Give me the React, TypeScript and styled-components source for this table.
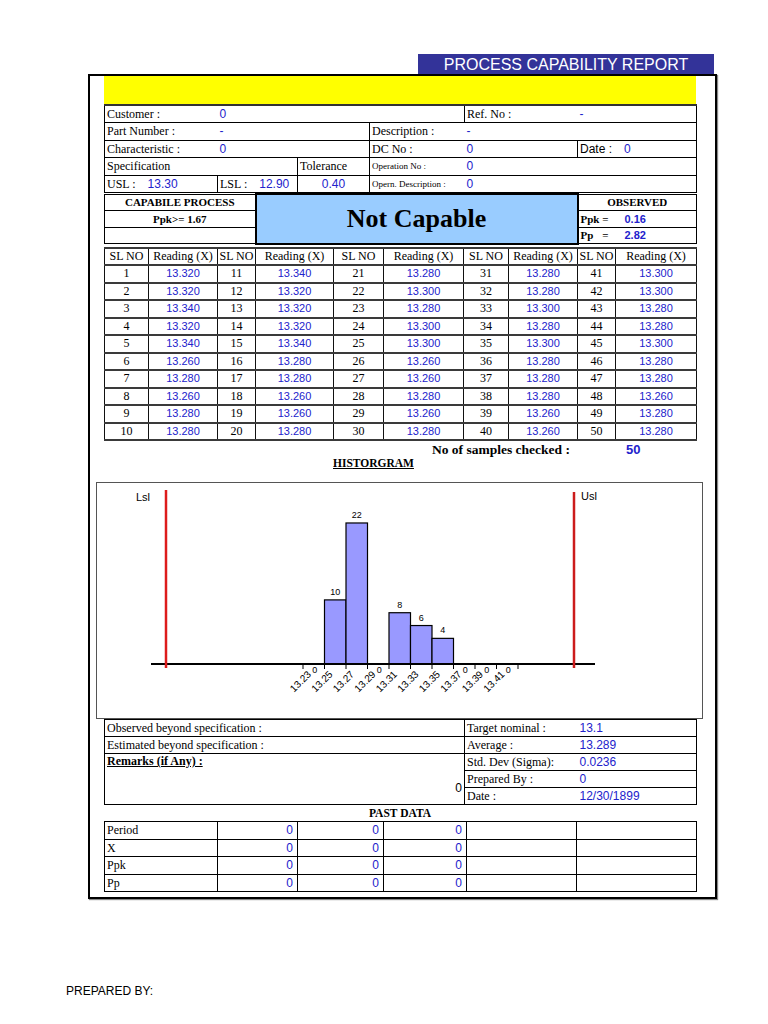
import styled, { createGlobalStyle } from 'styled-components';

const BLUE = '#2222cc';
const SERIF = '"Liberation Serif", "Times New Roman", serif';
const SANS = '"Liberation Sans", Arial, sans-serif';

const GlobalStyle = createGlobalStyle`
  html, body {
    margin: 0;
    padding: 0;
    background: #fff;
  }
  body {
    font-family: ${SERIF};
    color: #000;
  }
`;

const Page = styled.div`
  width: 768px;
  height: 1024px;
  padding-top: 54px;
  box-sizing: border-box;
`;

const Banner = styled.div`
  margin-left: 418px;
  width: 296px;
  height: 20px;
  background: #333399;
  color: #fff;
  font: 16px/21px ${SANS};
  text-align: center;
`;

const Sheet = styled.div`
  margin-left: 88px;
  width: 629px;
  box-sizing: border-box;
  border: 2px solid #000;
  box-shadow: 1px 1px 1px #888;
  padding: 0 19px 5px 14px;
`;

const YellowBand = styled.div`
  height: 28px;
  background: #ffff00;
`;

const Grid = styled.table`
  width: 592px;
  border-collapse: collapse;
  table-layout: fixed;
  border: 1px solid #000;
`;

const InfoTable = styled(Grid)`
  border-top: 2px solid #333;
`;

const Col = styled.col<{ $w: number }>`
  width: ${(p) => p.$w}px;
`;

const Row = styled.tr<{ $h?: number }>`
  height: ${(p) => p.$h ?? 17.5}px;
`;

const Cell = styled.td<{ $sep?: boolean; $align?: string }>`
  padding: 0 2px;
  border-top: 1px solid #000;
  border-bottom: 1px solid #000;
  border-left: ${(p) => (p.$sep ? '1px solid #000' : 'none')};
  border-right: none;
  font: 12px/14px ${SERIF};
  text-align: ${(p) => p.$align ?? 'left'};
  white-space: nowrap;
  overflow: hidden;
  vertical-align: middle;
`;

const Label = styled(Cell)<{ $tiny?: boolean }>`
  font-size: ${(p) => (p.$tiny ? '9px' : '12px')};
`;

const Value = styled(Cell)`
  color: ${BLUE};
  font-family: ${SANS};
`;

const Num = styled.span`
  margin-left: 12px;
  color: ${BLUE};
  font-family: ${SANS};
`;

const DateKey = styled.span`
  color: #000;
  margin-right: 12px;
`;

const CapTable = styled.table`
  width: 592px;
  border-collapse: collapse;
  table-layout: fixed;
`;

const CapCell = styled.td<{ $center?: boolean }>`
  padding: 0 2px;
  border: 1px solid #000;
  font: bold 11px/12px ${SERIF};
  text-align: ${(p) => (p.$center ? 'center' : 'left')};
  white-space: nowrap;
`;

const Verdict = styled.td`
  padding: 0;
  background: #99ccff;
  border: 2px solid #000;
  text-align: center;
  vertical-align: middle;
  font: bold 26px/26px ${SERIF};
`;

const ObsLine = styled.div`
  display: flex;
  align-items: baseline;
`;

const ObsKey = styled.span`
  display: flex;
  justify-content: space-between;
  width: 28px;
`;

const Stat = styled.span`
  margin-left: 16px;
  color: ${BLUE};
  font: bold 11px ${SANS};
`;

const DataTable = styled.table`
  width: 592px;
  margin-top: 2px;
  border-collapse: collapse;
  table-layout: fixed;
`;

const DataCell = styled.td<{ $reading?: boolean }>`
  padding: 0;
  border-top: 2px solid #3a3a3a;
  border-bottom: 2px solid #3a3a3a;
  border-left: 1px solid #111;
  border-right: 1px solid #111;
  text-align: center;
  white-space: nowrap;
  font: ${(p) => (p.$reading ? `11px/13px ${SANS}` : `12px/13px ${SERIF}`)};
  color: ${(p) => (p.$reading ? BLUE : '#000')};
`;

const SamplesLine = styled.div`
  display: flex;
  align-items: baseline;
  height: 16px;
  padding-left: 328px;
  font: bold 13.5px/17px ${SERIF};
`;

const SamplesCount = styled.span`
  margin-left: 56px;
  color: ${BLUE};
  font: bold 13px ${SANS};
`;

const SectionTitle = styled.div<{ $indent?: number; $h?: number }>`
  height: ${(p) => p.$h ?? 12}px;
  padding-left: ${(p) => p.$indent ?? 0}px;
  text-align: ${(p) => (p.$indent == null ? 'center' : 'left')};
  font: bold 11.5px/${(p) => p.$h ?? 12}px ${SERIF};
`;

const Underlined = styled.span`
  text-decoration: underline;
`;

const ChartFrame = styled.div`
  margin: 13px -7px 0 -8px;
  height: 237px;
  box-sizing: border-box;
  border: 1px solid #555;

  svg {
    display: block;
  }
`;

const RemarksCell = styled(Cell)`
  vertical-align: top;
`;

const RemarksBody = styled.div`
  display: flex;
  flex-direction: column;
`;

const RemarksTitle = styled.span`
  font-weight: bold;
  text-decoration: underline;
  line-height: 15px;
`;

const RemarksValue = styled.span`
  align-self: flex-end;
  margin-top: 12px;
  font-family: ${SANS};
`;

const PastTable = styled(Grid)``;

const PastCell = styled.td<{ $value?: boolean }>`
  padding: 0 4px 0 2px;
  border: 1px solid #000;
  text-align: ${(p) => (p.$value ? 'right' : 'left')};
  color: ${(p) => (p.$value ? BLUE : '#000')};
  font: ${(p) => (p.$value ? `12px/14px ${SANS}` : `12px/14px ${SERIF}`)};
`;

const Footer = styled.div`
  margin: 85px 0 0 66px;
  font: 12px/14px ${SANS};
`;

const readings = [
  ['13.320', '13.320', '13.340', '13.320', '13.340', '13.260', '13.280', '13.260', '13.280', '13.280'],
  ['13.340', '13.320', '13.320', '13.320', '13.340', '13.280', '13.280', '13.260', '13.260', '13.280'],
  ['13.280', '13.300', '13.280', '13.300', '13.300', '13.260', '13.260', '13.280', '13.260', '13.280'],
  ['13.280', '13.280', '13.300', '13.280', '13.300', '13.280', '13.280', '13.280', '13.260', '13.260'],
  ['13.300', '13.300', '13.280', '13.280', '13.300', '13.280', '13.280', '13.260', '13.280', '13.280'],
];

const dataCols = [44, 69, 38, 78, 50, 80, 45, 69, 38, 81];

const bins = [
  { label: '13.23', count: 0 },
  { label: '13.25', count: 10 },
  { label: '13.27', count: 22 },
  { label: '13.29', count: 0 },
  { label: '13.31', count: 8 },
  { label: '13.33', count: 6 },
  { label: '13.35', count: 4 },
  { label: '13.37', count: 0 },
  { label: '13.39', count: 0 },
  { label: '13.41', count: 0 },
];

const pastRows = ['Period', 'X', 'Ppk', 'Pp'];

const Histogram = () => {
  const axisY = 181;
  const start = 206;
  const step = 21.5;
  const unit = 6.41;
  return (
    <svg width={605} height={235} viewBox="0 0 605 235">
      <g fontFamily={SANS} fill="#000">
        <text x={39} y={18} fontSize={11}>Lsl</text>
        <text x={484} y={17} fontSize={11}>Usl</text>
      </g>
      {bins.map((b, i) => {
        const x = start + i * step;
        const h = b.count * unit;
        const cx = x + step / 2;
        return (
          <g key={b.label}>
            {b.count > 0 && (
              <>
                <rect x={x} y={axisY - h} width={step} height={h} fill="#9999ff" stroke="#000" strokeWidth={1.2} />
                <text x={cx} y={axisY - h - 5} fontSize={9} fontFamily={SANS} textAnchor="middle">
                  {b.count}
                </text>
              </>
            )}
            {b.count === 0 && (
              <text x={cx + 1} y={190} fontSize={9} fontFamily={SANS} textAnchor="middle">
                0
              </text>
            )}
            <text
              x={cx - 2}
              y={192}
              fontSize={10}
              fontFamily={SANS}
              textAnchor="end"
              transform={`rotate(-45 ${cx - 2} 192)`}
            >
              {b.label}
            </text>
          </g>
        );
      })}
      {Array.from({ length: 11 }, (_, i) => (
        <line key={i} x1={start + i * step} x2={start + i * step} y1={axisY} y2={axisY + 5} stroke="#000" strokeWidth={1} />
      ))}
      <line x1={54} x2={498} y1={axisY} y2={axisY} stroke="#000" strokeWidth={2} />
      <line x1={69} x2={69} y1={7} y2={185} stroke="#dd1c1c" strokeWidth={2.5} />
      <line x1={477} x2={477} y1={9} y2={185} stroke="#cc1c1c" strokeWidth={2.5} />
    </svg>
  );
};

export default function App() {
  return (
    <Page>
      <GlobalStyle />
      <Banner>PROCESS CAPABILITY REPORT</Banner>
      <Sheet>
        <YellowBand />

        <InfoTable>
          <colgroup>
            <Col $w={113} />
            <Col $w={80} />
            <Col $w={72} />
            <Col $w={95} />
            <Col $w={113} />
            <Col $w={119} />
          </colgroup>
          <tbody>
            <Row>
              <Label>Customer :</Label>
              <Value colSpan={3}>0</Value>
              <Label $sep>Ref. No :</Label>
              <Value>-</Value>
            </Row>
            <Row>
              <Label>Part Number :</Label>
              <Value colSpan={2}>-</Value>
              <Label $sep>Description :</Label>
              <Value colSpan={2}>-</Value>
            </Row>
            <Row>
              <Label>Characteristic :</Label>
              <Value colSpan={2}>0</Value>
              <Label $sep>DC No :</Label>
              <Value>0</Value>
              <Value $sep>
                <DateKey>Date :</DateKey>0
              </Value>
            </Row>
            <Row>
              <Label colSpan={2}>Specification</Label>
              <Label $sep>Tolerance</Label>
              <Label $sep $tiny>Operation No :</Label>
              <Value colSpan={2}>0</Value>
            </Row>
            <Row>
              <Label>
                USL :<Num>13.30</Num>
              </Label>
              <Label $sep>
                LSL :<Num>12.90</Num>
              </Label>
              <Value $sep $align="center">0.40</Value>
              <Label $sep $tiny>Opern. Description :</Label>
              <Value colSpan={2}>0</Value>
            </Row>
          </tbody>
        </InfoTable>

        <CapTable>
          <colgroup>
            <Col $w={151} />
            <Col $w={322} />
            <Col $w={119} />
          </colgroup>
          <tbody>
            <Row $h={16.5}>
              <CapCell $center>CAPABILE PROCESS</CapCell>
              <Verdict rowSpan={3}>Not Capable</Verdict>
              <CapCell $center>OBSERVED</CapCell>
            </Row>
            <Row $h={16.5}>
              <CapCell $center>Ppk&gt;= 1.67</CapCell>
              <CapCell>
                <ObsLine>
                  <ObsKey>
                    <span>Ppk</span>
                    <span>=</span>
                  </ObsKey>
                  <Stat>0.16</Stat>
                </ObsLine>
              </CapCell>
            </Row>
            <Row $h={16.5}>
              <CapCell />
              <CapCell>
                <ObsLine>
                  <ObsKey>
                    <span>Pp</span>
                    <span>=</span>
                  </ObsKey>
                  <Stat>2.82</Stat>
                </ObsLine>
              </CapCell>
            </Row>
          </tbody>
        </CapTable>

        <DataTable>
          <colgroup>
            {dataCols.map((w, i) => (
              <Col key={i} $w={w} />
            ))}
          </colgroup>
          <tbody>
            <Row>
              {readings.map((_, c) => (
                <>
                  <DataCell key={`h${c}`}>SL NO</DataCell>
                  <DataCell key={`r${c}`}>Reading (X)</DataCell>
                </>
              ))}
            </Row>
            {Array.from({ length: 10 }, (_, r) => (
              <Row key={r}>
                {readings.map((col, c) => (
                  <>
                    <DataCell key={`n${c}`}>{c * 10 + r + 1}</DataCell>
                    <DataCell key={`v${c}`} $reading>
                      {col[r]}
                    </DataCell>
                  </>
                ))}
              </Row>
            ))}
          </tbody>
        </DataTable>

        <SamplesLine>
          No of samples checked :<SamplesCount>50</SamplesCount>
        </SamplesLine>
        <SectionTitle $indent={229}>
          <Underlined>HISTORGRAM</Underlined>
        </SectionTitle>

        <ChartFrame>
          <Histogram />
        </ChartFrame>

        <Grid>
          <colgroup>
            <Col $w={360} />
            <Col $w={113} />
            <Col $w={119} />
          </colgroup>
          <tbody>
            <Row $h={17}>
              <Label>Observed beyond specification :</Label>
              <Label $sep>Target nominal :</Label>
              <Value>13.1</Value>
            </Row>
            <Row $h={17}>
              <Label>Estimated beyond specification :</Label>
              <Label $sep>Average :</Label>
              <Value>13.289</Value>
            </Row>
            <Row $h={17}>
              <RemarksCell rowSpan={3}>
                <RemarksBody>
                  <RemarksTitle>Remarks (if Any) :</RemarksTitle>
                  <RemarksValue>0</RemarksValue>
                </RemarksBody>
              </RemarksCell>
              <Label $sep>Std. Dev (Sigma):</Label>
              <Value>0.0236</Value>
            </Row>
            <Row $h={17}>
              <Label $sep>Prepared By :</Label>
              <Value>0</Value>
            </Row>
            <Row $h={17}>
              <Label $sep>Date :</Label>
              <Value>12/30/1899</Value>
            </Row>
          </tbody>
        </Grid>

        <SectionTitle $h={16}>PAST DATA</SectionTitle>

        <PastTable>
          <colgroup>
            <Col $w={113} />
            <Col $w={80} />
            <Col $w={86} />
            <Col $w={83} />
            <Col $w={110} />
            <Col $w={120} />
          </colgroup>
          <tbody>
            {pastRows.map((name) => (
              <Row key={name}>
                <PastCell>{name}</PastCell>
                <PastCell $value>0</PastCell>
                <PastCell $value>0</PastCell>
                <PastCell $value>0</PastCell>
                <PastCell />
                <PastCell />
              </Row>
            ))}
          </tbody>
        </PastTable>
      </Sheet>
      <Footer>PREPARED BY:</Footer>
    </Page>
  );
}
